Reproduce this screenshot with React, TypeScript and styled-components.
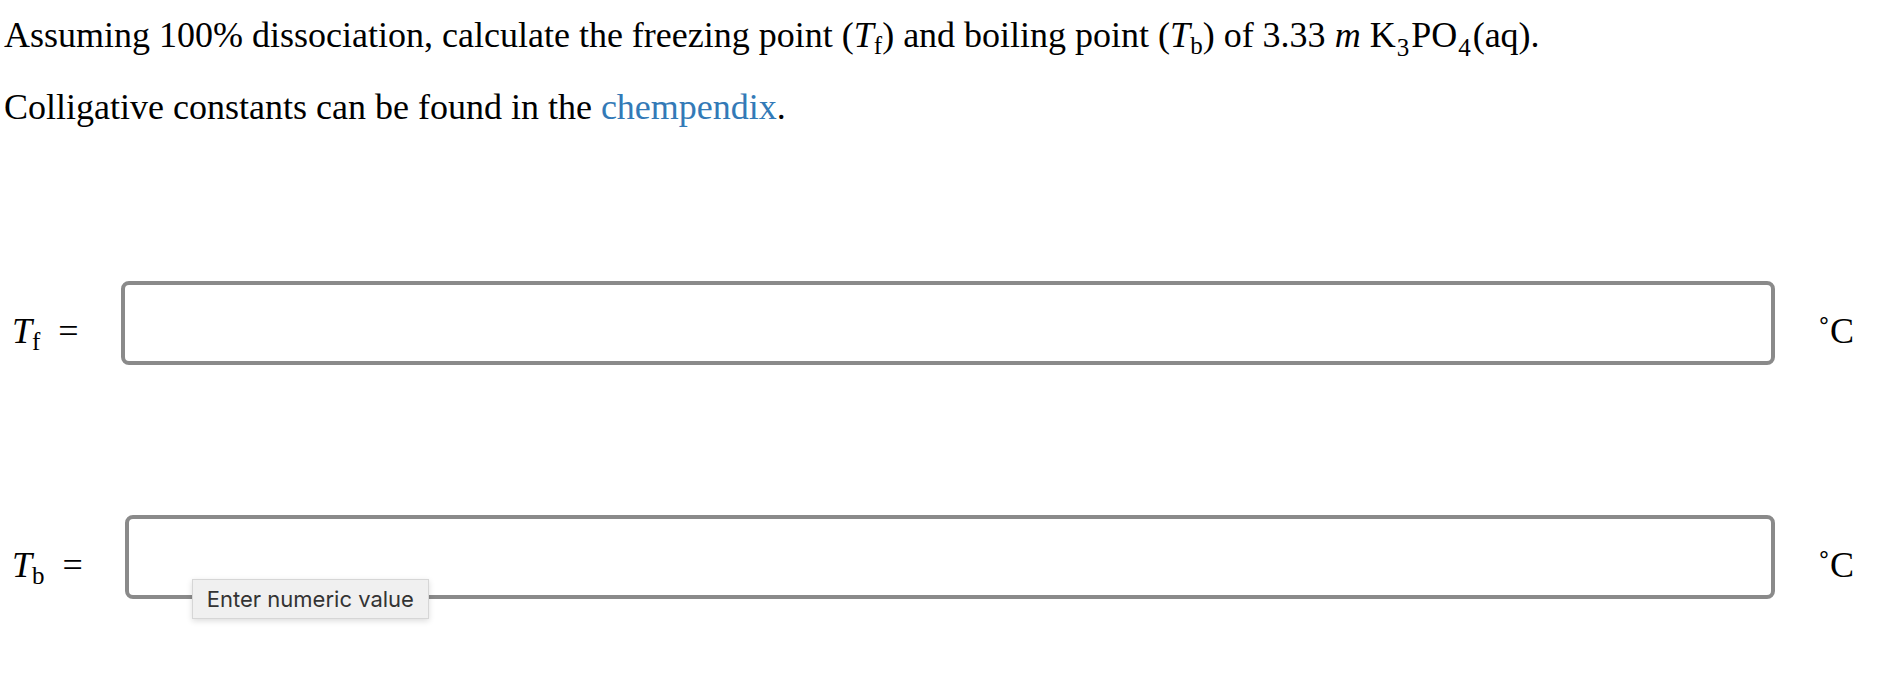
import styled, { createGlobalStyle } from "styled-components";

const GlobalStyle = createGlobalStyle`
    html, body {
        margin: 0;
        padding: 0;
        background: #ffffff;
    }
    body {
        font-family: "Liberation Serif", "Times New Roman", serif;
        color: #000000;
    }
`;

const Page = styled.div`
    width: 1882px;
    height: 686px;
    box-sizing: border-box;
    padding: 11px 0 0 4px;
    overflow: hidden;
`;

const Prompt = styled.p`
    margin: 0 0 24px;
    font-size: 36px;
    line-height: 48px;
    white-space: nowrap;
`;

const Sub = styled.sub`
    font-size: 25px;
    line-height: 0;
    vertical-align: -7px;
    font-style: normal;
`;

// chemical formula subscripts sit a little lower and looser
const FormulaSub = styled(Sub)`
    vertical-align: -9px;
    margin: 0 2px 0 1px;
`;

const Link = styled.a`
    color: #337ab7;
    text-decoration: none;
`;

const Answers = styled.div`
    display: flex;
    flex-direction: column;
    gap: 150px;
    margin-top: 150px;
    padding-left: 8px;
    padding-right: 28px;
`;

const Row = styled.div`
    display: flex;
    align-items: center;
`;

const Label = styled.span`
    display: block;
    padding-top: 16px;
    font-size: 36px;
    line-height: 36px;
    white-space: nowrap;
`;

const Var = styled.i`
    font-style: italic;
`;

const Equals = styled.span`
    margin-left: 18px;
`;

const Field = styled.div`
    position: relative;
    flex: 1;
    margin-left: 42px;
`;

const Input = styled.input`
    display: block;
    width: 100%;
    height: 84px;
    box-sizing: border-box;
    border: 4px solid #8a8a8a;
    border-radius: 8px;
    background: #ffffff;
    outline: none;
    font-size: 30px;
    padding: 0 16px;
`;

const Unit = styled.span`
    margin-left: 43px;
    padding-top: 16px;
    font-size: 36px;
    line-height: 36px;
`;

const Tooltip = styled.div`
    position: absolute;
    left: 67px;
    top: 64px;
    padding: 6px 14px;
    background: #f0f0f0;
    border: 1px solid #d6d6d6;
    box-shadow: 0 2px 6px rgba(0, 0, 0, 0.14);
    font-family: Inter, "Liberation Sans", sans-serif;
    font-size: 22px;
    line-height: 26px;
    color: #333333;
    white-space: nowrap;
`;

type AnswerProps = {
    sub: string;
    hint?: string;
};

function Answer({ sub, hint }: AnswerProps) {
    return (
        <Row>
            <Label>
                <Var>T</Var>
                <Sub>{sub}</Sub>
                <Equals>=</Equals>
            </Label>
            <Field>
                <Input type="text" aria-label={`T${sub}`} />
                {hint ? <Tooltip>{hint}</Tooltip> : null}
            </Field>
            <Unit>˚C</Unit>
        </Row>
    );
}

export default function App() {
    return (
        <Page>
            <GlobalStyle />
            <Prompt>
                Assuming 100% dissociation, calculate the freezing point (
                <Var>T</Var>
                <Sub>f</Sub>) and boiling point (<Var>T</Var>
                <Sub>b</Sub>) of 3.33 <Var>m</Var> K<FormulaSub>3</FormulaSub>PO
                <FormulaSub>4</FormulaSub>(aq).
            </Prompt>
            <Prompt>
                Colligative constants can be found in the{" "}
                <Link href="#">chempendix</Link>.
            </Prompt>
            <Answers>
                <Answer sub="f" />
                <Answer sub="b" hint="Enter numeric value" />
            </Answers>
        </Page>
    );
}
